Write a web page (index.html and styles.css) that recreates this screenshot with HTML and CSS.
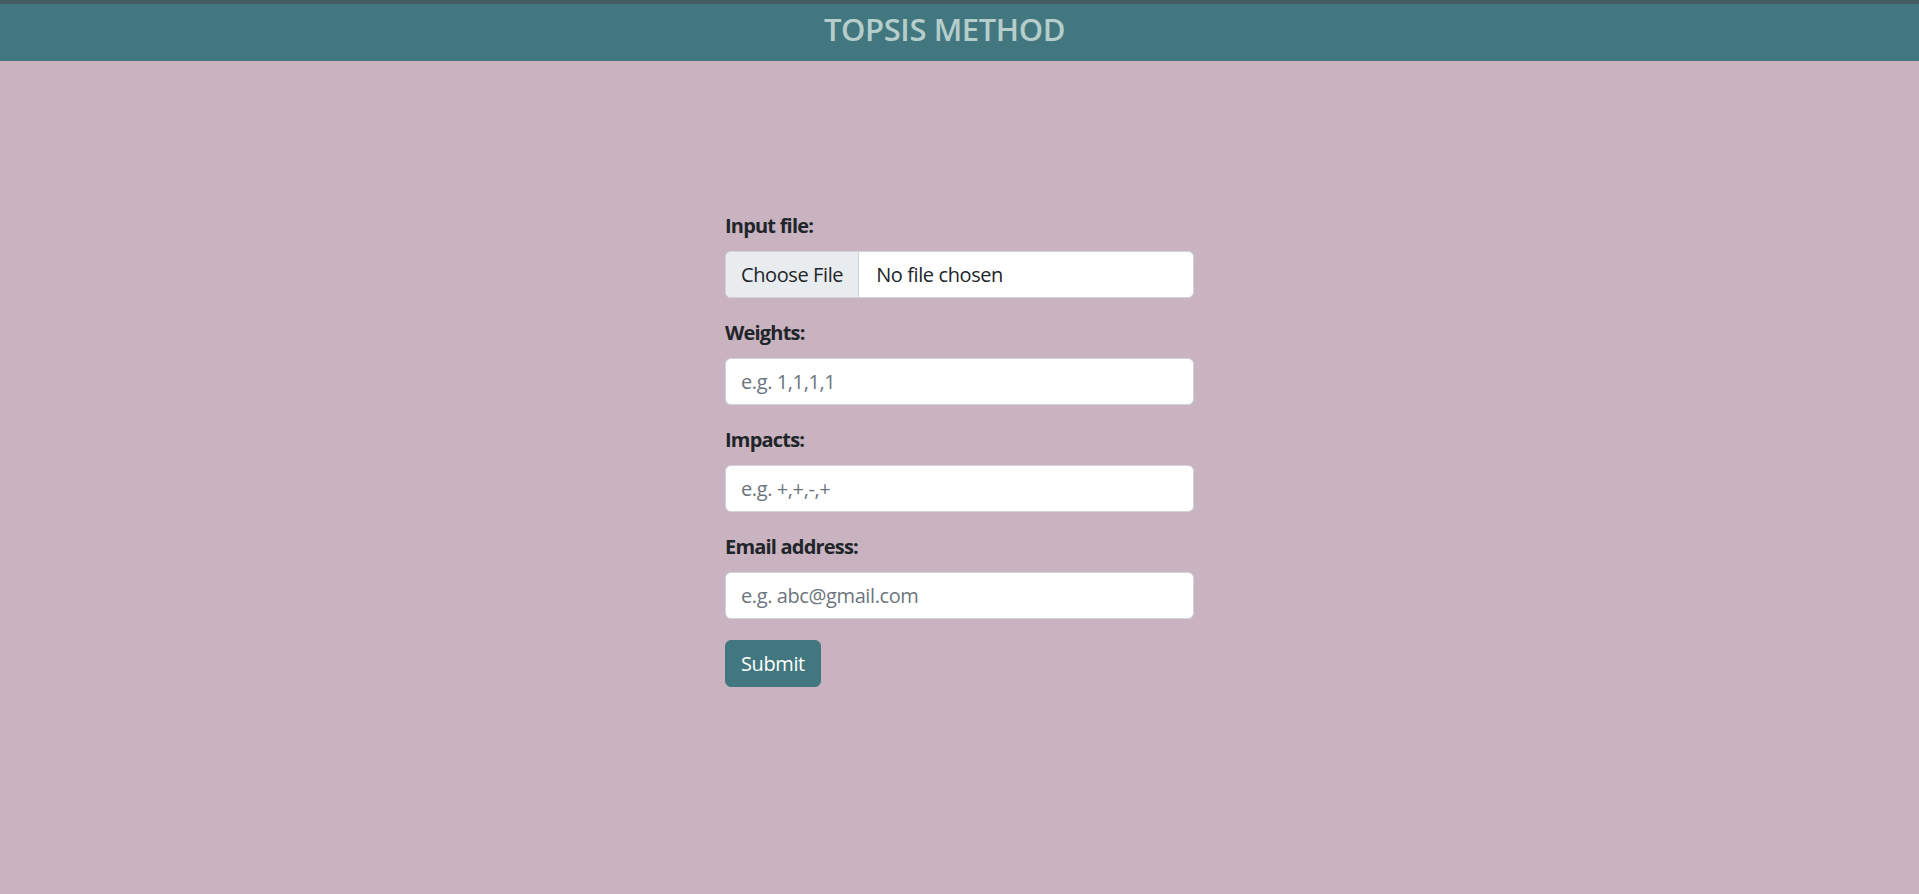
FILE: index.html
```html
<!DOCTYPE html>
<html lang="en">
<head>
    <meta charset="UTF-8">
    <meta name="viewport" content="width=device-width, initial-scale=1.0">
    <title>TOPSIS Method</title>
    <link rel="stylesheet" href="styles.css">
</head>
<body>
    <div class="header">
        <h1>TOPSIS METHOD</h1>
    </div>

    <div class="container">
        <form class="topsis-form">
            <div class="form-group">
                <label for="file">Input file:</label>
                <input type="file" id="file" class="form-control">
            </div>
            <div class="form-group">
                <label for="weights">Weights:</label>
                <input type="text" id="weights" class="form-control" placeholder="e.g. 1,1,1,1">
            </div>
            <div class="form-group">
                <label for="impacts">Impacts:</label>
                <input type="text" id="impacts" class="form-control" placeholder="e.g. +,+,-,+">
            </div>
            <div class="form-group">
                <label for="email">Email address:</label>
                <input type="email" id="email" class="form-control" placeholder="e.g. abc@gmail.com">
            </div>
            <button type="submit" class="btn-submit">Submit</button>
        </form>
    </div>
</body>
</html>
```

FILE: styles.css
```css
body {
    margin: 0;
    font-family: 'Open Sans', 'Noto Sans', sans-serif;
    font-size: 20px;
    line-height: 1.5;
    color: #212529;
    background: #c9b3c1;
}
.header {
    background: #43777f;
    border-top: 4px solid #465a62;
    height: 57px;
    padding-right: 30px;
    text-align: center;
}
.header h1 {
    margin: 0;
    font-size: 31px;
    font-weight: 600;
    line-height: 50px;
    letter-spacing: -0.4px;
    color: #b5cecc;
}
.container {
    width: 469px;
    margin: 0 auto;
    padding-top: 150px;
}
.form-group {
    margin-bottom: 20px;
}
.form-group label {
    display: block;
    font-weight: 700;
    margin-bottom: 10px;
    letter-spacing: -0.8px;
}
.form-control {
    display: block;
    box-sizing: border-box;
    width: 100%;
    height: 47px;
    padding: 7px 15px;
    font-family: inherit;
    font-size: 20px;
    line-height: 30px;
    letter-spacing: -0.4px;
    color: #212529;
    background: white;
    border: 1px solid #ced4da;
    border-radius: 6px;
    overflow: hidden;
}
.form-control::placeholder {
    color: #6c757d;
}
.form-control::file-selector-button {
    height: 47px;
    padding: 7px 15px;
    margin: -8px 17px -8px -15px;
    font-family: inherit;
    font-size: 20px;
    letter-spacing: -0.4px;
    color: #212529;
    background: #e9ecef;
    border: 0;
    border-right: 1px solid #ced4da;
    border-radius: 0;
}
.btn-submit {
    display: inline-block;
    height: 47px;
    margin-top: 1px;
    padding: 7px 15px;
    font-family: inherit;
    font-size: 20px;
    line-height: 30px;
    letter-spacing: -0.4px;
    color: white;
    background: #43777f;
    border: 1px solid #43777f;
    border-radius: 6px;
}
```
